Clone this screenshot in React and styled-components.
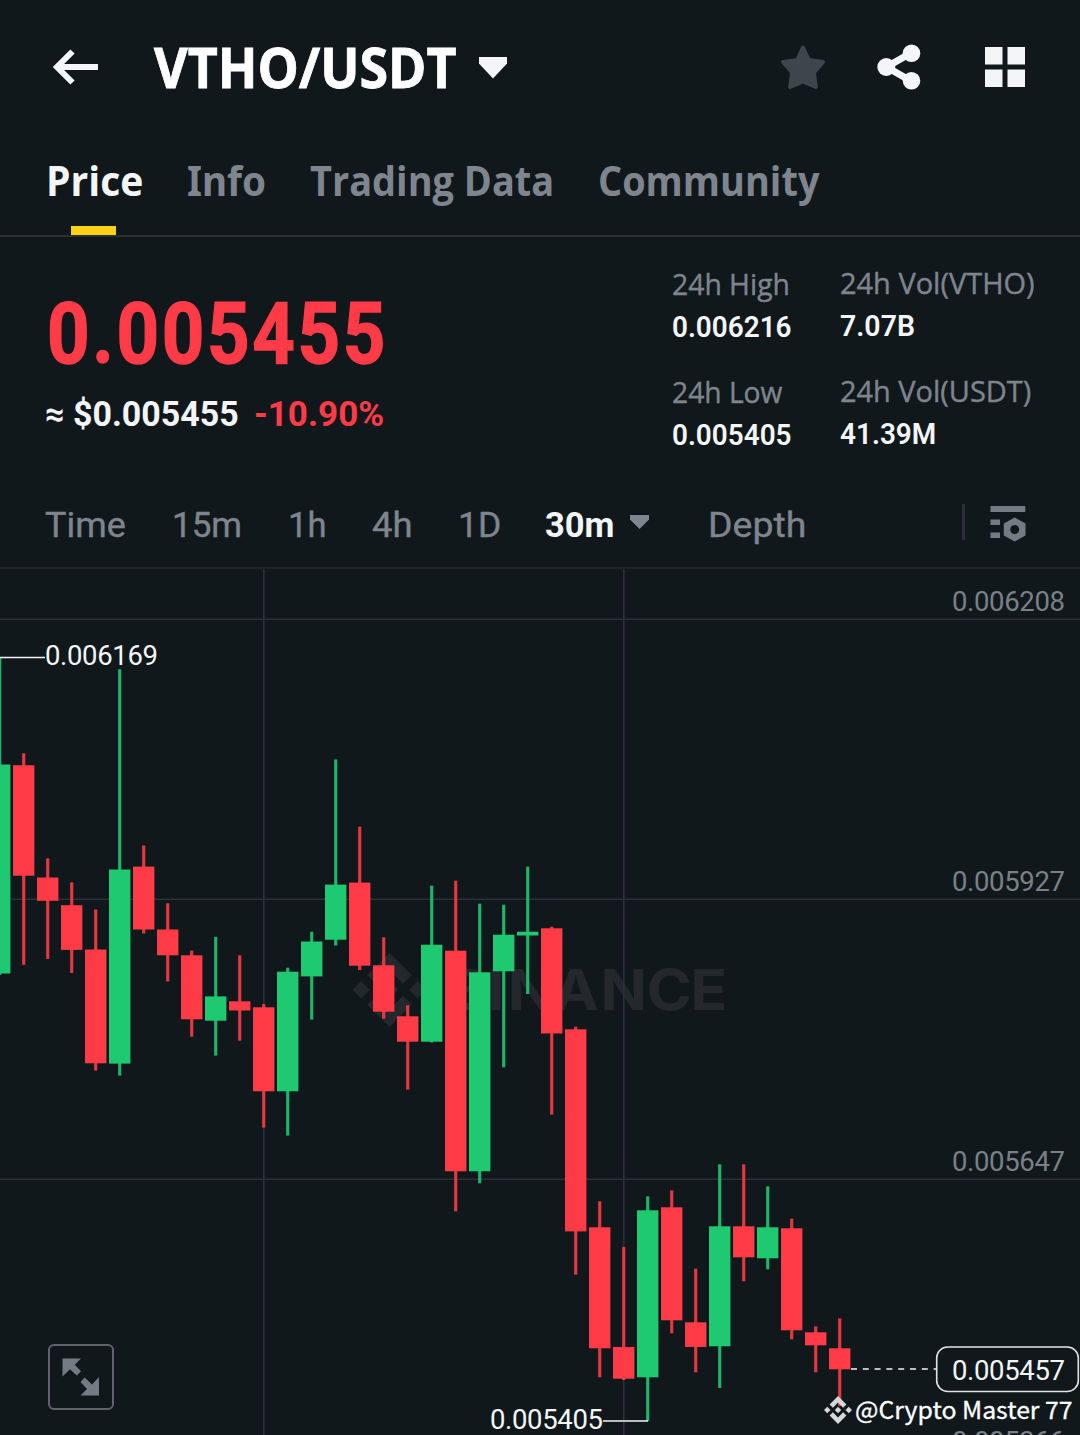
import React, { useLayoutEffect, useRef, useState } from 'react'
import styled, { createGlobalStyle } from 'styled-components'

const bg = '#11181c'
const grey = '#7f858e'
const white = '#f3f5f8'
const red = '#ff3b47'
const green = '#1ec971'

// condensed lettering: keeps a run of text at a fixed width
const Fit = ({ w, children, ...rest }) => {
  const ref = useRef(null)
  const [scale, setScale] = useState(1)

  useLayoutEffect(() => {
    setScale(w / ref.current.offsetWidth)
  }, [w, children])

  return (
    <FitBox $w={w} {...rest}>
      <FitText ref={ref} style={{ transform: `scaleX(${scale})` }}>{children}</FitText>
    </FitBox>
  )
}

// [up, high, open/close top, open/close bottom, low]
const candles = [
  [1, 657, 764.5, 973.5, 975],
  [0, 753.3, 765.2, 875.7, 964.8],
  [0, 858.3, 877.5, 900.8, 959],
  [0, 882.3, 905.2, 949.9, 973],
  [0, 909.5, 949.5, 1063.3, 1070.6],
  [1, 669.3, 869.5, 1063.6, 1075.6],
  [0, 845.5, 866.6, 929.5, 933.5],
  [0, 903.3, 929.5, 955.3, 981.5],
  [0, 950.6, 955.3, 1019.3, 1036.7],
  [1, 936.8, 996.4, 1020.7, 1055.6],
  [0, 955.3, 1001.3, 1010.5, 1040.7],
  [0, 1004, 1007.3, 1091.3, 1127.6],
  [1, 967.7, 971.7, 1091.3, 1135.6],
  [1, 931.7, 941.5, 976.4, 1019.6],
  [1, 759.4, 884.6, 939.7, 945.5],
  [0, 826.7, 882.6, 965.7, 970],
  [0, 937.3, 965.3, 1011.7, 1018.7],
  [0, 1005.3, 1016.3, 1041.7, 1089.7],
  [1, 885.7, 944.7, 1041.7, 1042.5],
  [0, 880.7, 950.7, 1171.3, 1211.3],
  [1, 903.7, 972.3, 1171.3, 1183.3],
  [1, 904.7, 934.7, 971.3, 1067.3],
  [1, 866.7, 931.7, 935.5, 994],
  [0, 926.7, 928.3, 1033.5, 1114.7],
  [0, 1026.7, 1029.3, 1231.4, 1274.7],
  [0, 1201.3, 1227.3, 1348.3, 1377.3],
  [0, 1247, 1347, 1378.7, 1380],
  [1, 1196.3, 1210.3, 1377.3, 1421],
  [0, 1190.3, 1207.3, 1320.3, 1333.3],
  [0, 1268.7, 1322.3, 1347, 1372.3],
  [1, 1164.3, 1226.3, 1346.3, 1388],
  [0, 1164.3, 1226.3, 1257.3, 1281.3],
  [1, 1186.3, 1227.3, 1258.3, 1269.3],
  [0, 1218.7, 1228.3, 1330.3, 1339.3],
  [0, 1326.3, 1332.3, 1345.3, 1372.3],
  [0, 1318.3, 1348.3, 1369.3, 1406],
]

const tabs = [
  { label: 'Price', w: 97, active: true },
  { label: 'Info', w: 79, noto: true },
  { label: 'Trading Data', w: 244 },
  { label: 'Community', w: 221 },
]

const stats = [
  [
    { label: '24h High', lw: 118, value: '0.006216', vw: 120 },
    { label: '24h Low', lw: 110, value: '0.005405', vw: 120 },
  ],
  [
    { label: '24h Vol(VTHO)', lw: 195, value: '7.07B', vw: 75 },
    { label: '24h Vol(USDT)', lw: 191, value: '41.39M', vw: 96 },
  ],
]

const BinanceMark = () => (
  <>
    <path d="M12 0 L19.2 7.2 L16.4 10 L12 5.6 L7.6 10 L4.8 7.2 Z" />
    <path d="M12 24 L4.8 16.8 L7.6 14 L12 18.4 L16.4 14 L19.2 16.8 Z" />
    <path d="M2.8 9.2 L5.6 12 L2.8 14.8 L0 12 Z" />
    <path d="M21.2 9.2 L24 12 L21.2 14.8 L18.4 12 Z" />
    <path d="M12 9.2 L14.8 12 L12 14.8 L9.2 12 Z" />
  </>
)

const Header = () => (
  <HeaderBar>
    <svg width="46" height="36" viewBox="0 0 46 36" fill="none" stroke={white} strokeWidth="6">
      <path d="M46 18 H5 M20.5 2.5 L5 18 L20.5 33.5" />
    </svg>
    <Pair w={303}>VTHO/USDT</Pair>
    <Caret width="28" height="22" viewBox="0 0 28 22" fill={white}>
      <path d="M0 0 H28 V6.5 L14 21.5 L0 6.5 Z" />
    </Caret>
    <Actions>
      <svg width="46" height="46" viewBox="0 0 46 46" fill="#3f454d" stroke="#3f454d" strokeWidth="4" strokeLinejoin="round">
        <path d="M23 3.5 L28.8 16 L43 18 L34 28.5 L35.8 43 L23 37.5 L10.2 43 L12 28.5 L3 18 L17.2 16 Z" />
      </svg>
      <svg width="44" height="46" viewBox="0 0 44 46" fill={white} stroke={white}>
        <path d="M34 9 L9.5 23 L34 37" fill="none" strokeWidth="7" />
        <circle cx="34.5" cy="9.3" r="8.8" stroke="none" />
        <circle cx="9.3" cy="23" r="9" stroke="none" />
        <circle cx="34.5" cy="36.8" r="8.8" stroke="none" />
      </svg>
      <svg width="40" height="40" viewBox="0 0 40 40" fill={white}>
        <path d="M0 0 H17.5 V17.5 H0 Z M22.5 0 H40 V17.5 H22.5 Z M0 22.5 H17.5 V40 H0 Z M22.5 22.5 H40 V40 H22.5 Z" />
      </svg>
    </Actions>
  </HeaderBar>
)

const Chart = () => (
  <ChartSvg viewBox="0 569 1080 866">
    <g fill="#24282c">
      <g transform="translate(352.5 952.8) scale(3.08)"><BinanceMark /></g>
      <g transform="scale(1.07 1)">
        <Watermark x="418.7 455.5 474.5 517 561.3 604.5 645" y="1010.5">BINANCE</Watermark>
      </g>
    </g>

    <g stroke="#2a3035" strokeWidth="1.6">
      <path d="M0 619.3 H1080 M0 899.3 H1080 M0 1179.3 H1080" />
      <path d="M263.8 569 V1435 M623.8 569 V1435" />
    </g>

    {candles.map(([up, high, top, bottom, low], i) => (
      <g key={i} fill={up ? green : red}>
        <rect x={24 * i - 1.9} y={high} width="3.2" height={low - high} opacity=".88" />
        <rect x={24 * i - 11} y={top} width="21.4" height={bottom - top} />
      </g>
    ))}

    <AxisLabel x="952" y="610.5" textLength="113">0.006208</AxisLabel>
    <AxisLabel x="952" y="890.5" textLength="113">0.005927</AxisLabel>
    <AxisLabel x="952" y="1170.5" textLength="113">0.005647</AxisLabel>
    <AxisLabel x="952" y="1450.5" textLength="113">0.005366</AxisLabel>

    <g fill="none" stroke={white} strokeWidth="1.7">
      <path d="M0 657.5 H45 M603 1421 H648" />
      <path d="M851 1369 H936" strokeDasharray="6 5.8" />
    </g>
    <rect x="936.7" y="1347" width="141.6" height="44.5" rx="11" fill={bg} stroke="#dfe3e6" strokeWidth="1.6" />
    <AxisLabel $bright x="45" y="664.5" textLength="113">0.006169</AxisLabel>
    <AxisLabel $bright x="490" y="1428.5" textLength="113">0.005405</AxisLabel>
    <AxisLabel $bright x="952" y="1379.5" textLength="113">0.005457</AxisLabel>
  </ChartSvg>
)

const App = () => (
  <Screen>
    <GlobalStyle />
    <Header />

    <Tabs>
      {tabs.map((t) => (
        <Tab key={t.label} $active={t.active} $noto={t.noto}>
          <Fit w={t.w}>{t.label}</Fit>
          {t.active && <TabMarker />}
        </Tab>
      ))}
    </Tabs>

    <Summary>
      <div>
        <LastPrice w={341}>0.005455</LastPrice>
        <SubPrice>
          <Fit w={194}>≈ $0.005455</Fit>
          <Change w={130}>-10.90%</Change>
        </SubPrice>
      </div>
      <Stats>
        {stats.map((col, i) => (
          <StatColumn key={i} $drop={i === 0}>
            {col.map((s) => (
              <div key={s.label}>
                <StatLabel w={s.lw}>{s.label}</StatLabel>
                <StatValue w={s.vw}>{s.value}</StatValue>
              </div>
            ))}
          </StatColumn>
        ))}
      </Stats>
    </Summary>

    <Intervals>
      <Interval w={81}>Time</Interval>
      <Interval w={70} $gap={46}>15m</Interval>
      <Interval w={39} $gap={46}>1h</Interval>
      <Interval w={41} $gap={45}>4h</Interval>
      <Interval w={43} $gap={45}>1D</Interval>
      <Interval w={70} $gap={44} $active>30m</Interval>
      <IntervalCaret width="19" height="14" viewBox="0 0 19 14">
        <path d="M0 0 H19 V4.5 L9.5 14 L0 4.5 Z" />
      </IntervalCaret>
      <Interval w={98} $gap={59}>Depth</Interval>
      <Divider />
      <SettingsIcon width="36" height="37" viewBox="0 0 36 37">
        <path d="M0.5 1 H35.3 V7 H0.5 Z M0.5 14.5 H10 V20 H0.5 Z M0.5 27.5 H10 V33 H0.5 Z" />
        <path fillRule="evenodd" d="M24.7 12.5 L35.5 18.5 V30.5 L24.7 36.5 L13.8 30.5 V18.5 Z M24.7 20 A4.5 4.5 0 1 0 24.7 29 A4.5 4.5 0 1 0 24.7 20 Z" />
      </SettingsIcon>
    </Intervals>

    <ChartArea>
      <Chart />
      <Expand>
        <svg width="38" height="38" viewBox="0 0 38 38" fill="#757b85">
          <path d="M0.5 0.5 H19 L12.8 6.7 L19 13.2 L14.8 17.6 L8 11.2 L0.5 18.5 Z" />
          <path d="M37 37.5 H18.5 L25 31 L18.5 24 L22.7 19.5 L30 26.5 L37 19 Z" />
        </svg>
      </Expand>
      <Credit>
        <svg width="28" height="28" viewBox="0 0 24 24" fill="#d8d8d8"><BinanceMark /></svg>
        <CreditName w={218}>@Crypto Master 77</CreditName>
      </Credit>
    </ChartArea>
  </Screen>
)

export default App

const GlobalStyle = createGlobalStyle`
  * {
    box-sizing: border-box;
  }
  body {
    margin: 0;
    background: ${bg};
    overflow: hidden;
  }
  svg {
    display: block;
    flex: none;
  }
`;

const FitBox = styled.div`
  width: ${(p) => p.$w}px;
  flex: none;
  white-space: nowrap;
`;

const FitText = styled.span`
  display: inline-block;
  transform-origin: 0 50%;
`;

const Screen = styled.div`
  width: 1080px;
  height: 1435px;
  overflow: hidden;
  background: ${bg};
  color: ${white};
  font-family: Roboto, sans-serif;
`;

const HeaderBar = styled.header`
  display: flex;
  align-items: center;
  height: 134px;
  padding: 0 55px 0 52px;
`;

const Pair = styled(Fit)`
  margin: 0 22px 0 56px;
  font: 700 55.5px/80px 'Open Sans', sans-serif;
  color: #fff;
  -webkit-text-stroke: 0.8px #fff;
`;

const Caret = styled.svg`
  margin-top: 2px;
`;

const Actions = styled.div`
  display: flex;
  align-items: center;
  gap: 51px;
  margin-left: auto;

  svg:last-child {
    margin-left: 13px;
  }
`;

const Tabs = styled.nav`
  display: flex;
  gap: 44px;
  height: 103px;
  padding-left: 46px;
  border-bottom: 2px solid #2a3034;
`;

const Tab = styled.div`
  font: 700 41.5px/92px ${(p) => (p.$noto ? "'Noto Sans'" : "'Open Sans'")}, sans-serif;
  color: ${(p) => (p.$active ? white : grey)};
`;

const TabMarker = styled.div`
  width: 45px;
  height: 9px;
  margin-left: 25px;
  background: #fcd216;
`;

const Summary = styled.section`
  display: flex;
  justify-content: space-between;
  height: 245px;
  padding: 25px 44px 0 45px;
`;

const LastPrice = styled(Fit)`
  margin: 22px 0 9px 2px;
  font-size: 85px;
  font-weight: 700;
  line-height: 100px;
  letter-spacing: 3px;
  color: ${red};
  -webkit-text-stroke: 1.4px ${red};
`;

const SubPrice = styled.div`
  display: flex;
  gap: 15px;
  font-size: 35px;
  font-weight: 700;
  line-height: 44px;
`;

const Change = styled(Fit)`
  color: ${red};
`;

const Stats = styled.div`
  display: grid;
  grid-template-columns: 168px 196px;
`;

const StatColumn = styled.div`
  display: flex;
  flex-direction: column;
  gap: 23px;
  padding-top: ${(p) => (p.$drop ? 1 : 0)}px;
`;

const StatLabel = styled(Fit)`
  font: 400 30px/42px 'Open Sans', sans-serif;
  color: ${grey};
  -webkit-text-stroke: 0.4px ${grey};
`;

const StatValue = styled(Fit)`
  font-size: 30px;
  font-weight: 600;
  line-height: 43px;
`;

const Intervals = styled.div`
  display: flex;
  align-items: center;
  height: 87px;
  padding: 0 54px 0 45px;
  border-bottom: 2px solid #1e2428;
`;

const Interval = styled(Fit)`
  margin-left: ${(p) => p.$gap || 0}px;
  font-size: 35.5px;
  font-weight: ${(p) => (p.$active ? 700 : 400)};
  line-height: 44px;
  color: ${(p) => (p.$active ? white : grey)};
  -webkit-text-stroke: ${(p) => (p.$active ? 0 : 0.4)}px ${grey};
`;

const IntervalCaret = styled.svg`
  margin: -6px 0 0 15px;
  fill: #7f858e;
`;

const Divider = styled.div`
  width: 3px;
  height: 36px;
  margin: -6px 25px 0 auto;
  background: #2a3035;
`;

const SettingsIcon = styled.svg`
  margin-top: -3px;
  fill: #757b85;
`;

const ChartArea = styled.section`
  position: relative;
  height: 866px;
`;

const ChartSvg = styled.svg`
  width: 1080px;
  height: 866px;
`;

const Watermark = styled.text`
  font: 700 57px Inter, sans-serif;
`;

const AxisLabel = styled.text`
  font: 400 27.5px Roboto, sans-serif;
  fill: ${(p) => (p.$bright ? white : '#7a8088')};
`;

const Expand = styled.button`
  position: absolute;
  left: 48px;
  bottom: 25px;
  display: flex;
  align-items: center;
  justify-content: center;
  width: 66px;
  height: 66px;
  padding: 0;
  background: none;
  border: 2px solid #5e6469;
  border-radius: 6px;
`;

const Credit = styled.div`
  position: absolute;
  right: 7px;
  bottom: 4px;
  display: flex;
  align-items: center;
  gap: 3px;
  font: 400 24px/40px 'Noto Sans CJK SC', sans-serif;
  color: #fff;
`;

const CreditName = styled(Fit)`
  margin-bottom: 2px;
  -webkit-text-stroke: 0.3px #fff;
`;
